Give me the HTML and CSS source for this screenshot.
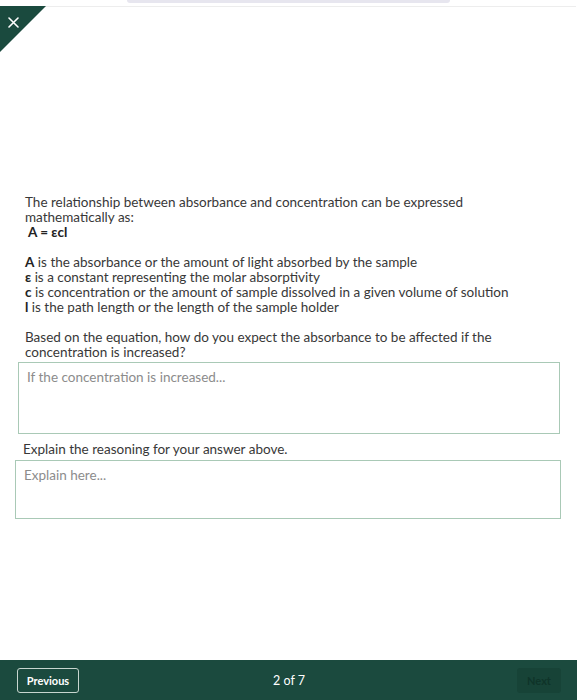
FILE: index.html
```html
<!DOCTYPE html>
<html>
<head>
<meta charset="utf-8">
<link rel="stylesheet" href="styles.css">
</head>
<body>
<div class="page">
  <header class="topbar">
    <div class="pill"></div>
    <div class="close-corner">
      <svg class="close-icon" width="11" height="11" viewBox="0 0 11 11"><path d="M1 1 L10 10 M10 1 L1 10" stroke="#fff" stroke-width="1.6" stroke-linecap="round"/></svg>
    </div>
  </header>
  <main class="content">
    <p class="para">The relationship between absorbance and concentration can be expressed<br>mathematically as:<br><b class="eq">A = εcl</b></p>
    <p class="para"><b>A</b> is the absorbance or the amount of light absorbed by the sample<br><b>ε</b> is a constant representing the molar absorptivity<br><b>c</b> is concentration or the amount of sample dissolved in a given volume of solution<br><b>l</b> is the path length or the length of the sample holder</p>
    <p class="para question">Based on the equation, how do you expect the absorbance to be affected if the<br>concentration is increased?</p>
    <textarea class="answer answer-one" placeholder="If the concentration is increased..."></textarea>
    <p class="label">Explain the reasoning for your answer above.</p>
    <textarea class="answer answer-two" placeholder="Explain here..."></textarea>
  </main>
  <footer class="footer">
    <button class="btn-prev">Previous</button>
    <span class="progress">2 of 7</span>
    <button class="btn-next">Next</button>
  </footer>
</div>
</body>
</html>
```

FILE: styles.css
```css
* { box-sizing: border-box; }
html, body { margin: 0; padding: 0; background: #fff; }
body { font-family: "Lato", "Open Sans", sans-serif; color: #383838; }

.page {
  width: 579px;
  height: 700px;
  display: flex;
  flex-direction: column;
}

.topbar {
  position: relative;
  height: 7px;
  border-bottom: 1px solid #ededed;
  margin-right: 3px;
}
.pill {
  position: absolute;
  left: 127px;
  top: 0;
  width: 323px;
  height: 3px;
  background: #e7e6ef;
  border-radius: 0 0 6px 6px;
}
.close-corner {
  position: absolute;
  left: 0;
  top: 6px;
  width: 46px;
  height: 46px;
  background: #1a4a3e;
  clip-path: polygon(0 0, 100% 0, 0 100%);
}
.close-icon {
  position: absolute;
  left: 8px;
  top: 11px;
}

.content {
  flex: 1;
  padding-top: 188px;
}
.para {
  margin: 0 0 15px 25px;
  font-size: 13.5px;
  line-height: 15px;
  width: 540px;
}
.para b { font-weight: 700; color: #222; }
.eq { margin-left: 3px; }
.question { margin-bottom: 2px; }

.answer {
  display: block;
  resize: none;
  border: 1px solid #a9c9b6;
  border-radius: 0;
  font-family: "Lato", "Open Sans", sans-serif;
  font-size: 13.5px;
  line-height: 15px;
  color: #383838;
  padding: 7px 8px;
  outline: none;
}
.answer::placeholder { color: #8c8c8c; }
.answer-one {
  margin-left: 18px;
  width: 542px;
  height: 72px;
}
.answer-two {
  margin-left: 15px;
  width: 546px;
  height: 59px;
}
.label {
  margin: 8px 0 3px 23px;
  font-size: 13.5px;
  line-height: 15px;
}

.footer {
  height: 40px;
  width: 577px;
  background: #1b4a3e;
  display: flex;
  align-items: center;
  justify-content: space-between;
  padding: 0 16px 0 17px;
}
.btn-prev {
  width: 62px;
  height: 25px;
  background: transparent;
  border: 1px solid #c8d6cf;
  border-radius: 3px;
  color: #fff;
  font-family: "Lato", sans-serif;
  font-weight: 700;
  font-size: 11px;
  padding: 0;
}
.progress {
  color: #fff;
  font-size: 12.5px;
  margin-right: 18px;
}
.btn-next {
  width: 44px;
  height: 25px;
  background: #174337;
  border: none;
  border-radius: 3px;
  color: #0f3429;
  font-family: "Lato", sans-serif;
  font-weight: 700;
  font-size: 11px;
  padding: 0;
}
```
